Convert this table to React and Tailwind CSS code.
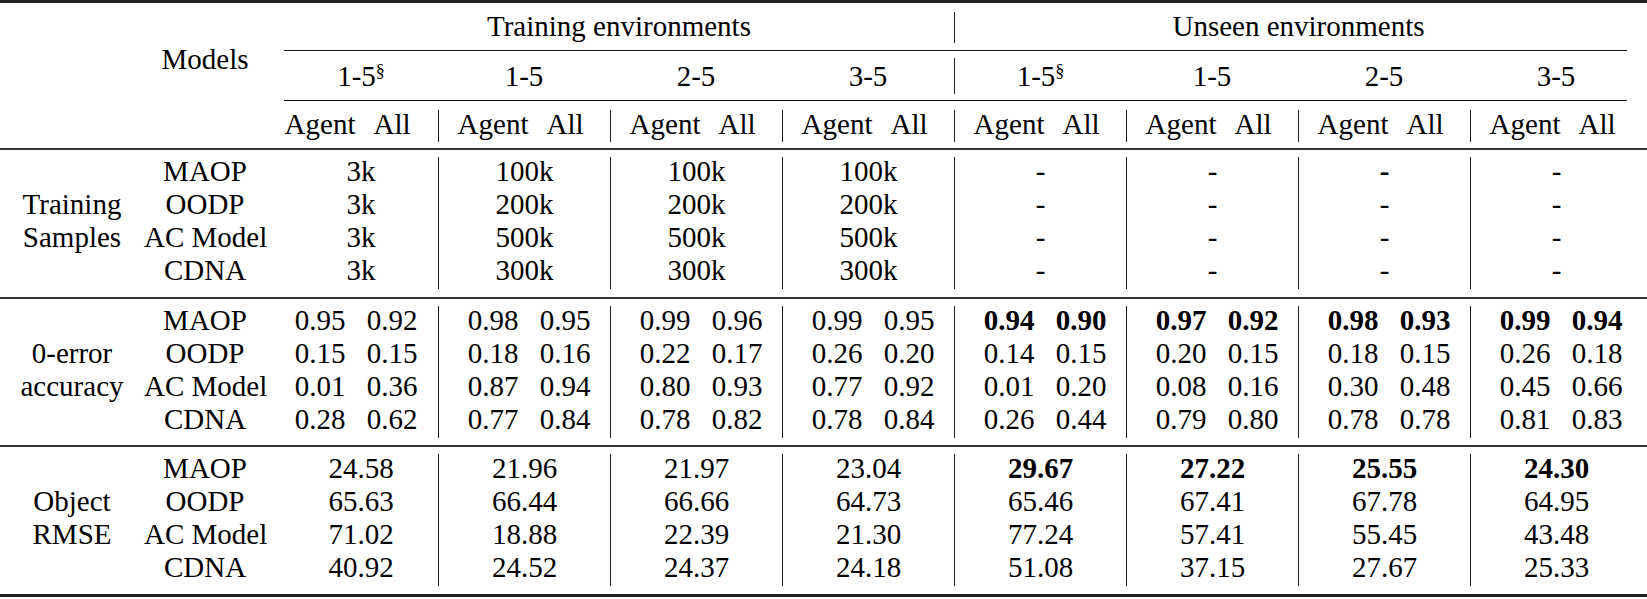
import React from "react";
import clsx from "clsx";

const sections = [
  {
    label: ["Training", "Samples"],
    rows: [
      { model: "MAOP", vals: ["3k", "100k", "100k", "100k", "-", "-", "-", "-"], bold: [6] },
      { model: "OODP", vals: ["3k", "200k", "200k", "200k", "-", "-", "-", "-"] },
      { model: "AC Model", vals: ["3k", "500k", "500k", "500k", "-", "-", "-", "-"] },
      { model: "CDNA", vals: ["3k", "300k", "300k", "300k", "-", "-", "-", "-"] },
    ],
  },
  {
    label: ["0-error", "accuracy"],
    rows: [
      {
        model: "MAOP",
        vals: [
          ["0.95", "0.92"], ["0.98", "0.95"], ["0.99", "0.96"], ["0.99", "0.95"],
          ["0.94", "0.90"], ["0.97", "0.92"], ["0.98", "0.93"], ["0.99", "0.94"],
        ],
        bold: [4, 5, 6, 7],
      },
      {
        model: "OODP",
        vals: [
          ["0.15", "0.15"], ["0.18", "0.16"], ["0.22", "0.17"], ["0.26", "0.20"],
          ["0.14", "0.15"], ["0.20", "0.15"], ["0.18", "0.15"], ["0.26", "0.18"],
        ],
      },
      {
        model: "AC Model",
        vals: [
          ["0.01", "0.36"], ["0.87", "0.94"], ["0.80", "0.93"], ["0.77", "0.92"],
          ["0.01", "0.20"], ["0.08", "0.16"], ["0.30", "0.48"], ["0.45", "0.66"],
        ],
      },
      {
        model: "CDNA",
        vals: [
          ["0.28", "0.62"], ["0.77", "0.84"], ["0.78", "0.82"], ["0.78", "0.84"],
          ["0.26", "0.44"], ["0.79", "0.80"], ["0.78", "0.78"], ["0.81", "0.83"],
        ],
      },
    ],
  },
  {
    label: ["Object", "RMSE"],
    rows: [
      { model: "MAOP", vals: ["24.58", "21.96", "21.97", "23.04", "29.67", "27.22", "25.55", "24.30"], bold: [4, 5, 6, 7] },
      { model: "OODP", vals: ["65.63", "66.44", "66.66", "64.73", "65.46", "67.41", "67.78", "64.95"] },
      { model: "AC Model", vals: ["71.02", "18.88", "22.39", "21.30", "77.24", "57.41", "55.45", "43.48"] },
      { model: "CDNA", vals: ["40.92", "24.52", "24.37", "24.18", "51.08", "37.15", "27.67", "25.33"] },
    ],
  },
];

const envs = ["1-5§", "1-5", "2-5", "3-5", "1-5§", "1-5", "2-5", "3-5"];

function Cell({ v, i, bold }) {
  const cls = clsx("w-[172px]", i > 0 && "border-l border-[#222]", bold && "font-bold");
  if (Array.isArray(v)) {
    return (
      <div className={clsx(cls, "flex pl-[18px]")}>
        <span className="w-[72px] text-center">{v[0]}</span>
        <span className="w-[72px] text-center">{v[1]}</span>
      </div>
    );
  }
  return <div className={clsx(cls, "text-center", i === 0 && "pl-[18px]")}>{v}</div>;
}

function EnvLabel({ text }) {
  if (text.endsWith("§")) {
    return (
      <>
        {text.slice(0, -1)}
        <sup className="text-[18px]">§</sup>
      </>
    );
  }
  return text;
}

export default function App() {
  return (
    <div className="w-[1647px] h-[599px] bg-white text-black text-[29px] whitespace-nowrap font-['Liberation_Serif'] [font-family:Liberation_Serif]">
      {/* top rule */}
      <div className="h-[3px] bg-[#222]" />

      {/* header rows 1-2 */}
      <div className="flex">
        <div className="w-[266px] flex">
          <div className="w-[144px]" />
          <div className="w-[122px] text-center pt-[40px] leading-[33px]">Models</div>
        </div>
        <div className="flex-1">
          <div className="flex pt-[9px] pb-[7px]">
            <div className="w-[688px] h-[31px] leading-[29px] text-center pl-[18px]">
              Training environments
            </div>
            <div className="w-[688px] h-[31px] leading-[29px] text-center border-l border-[#222]">
              Unseen environments
            </div>
          </div>
          <div className="h-px bg-[#111] ml-[18px] mr-[20px]" />
          <div className="flex pt-[7px] pb-[6px]">
            {envs.map((e, i) => (
              <div
                key={i}
                className={clsx(
                  "w-[172px] h-[36px] leading-[37px] text-center",
                  i === 0 && "pl-[18px]",
                  i === 4 && "border-l border-[#222]"
                )}
              >
                <EnvLabel text={e} />
              </div>
            ))}
          </div>
          <div className="h-px bg-[#111] ml-[18px] mr-[20px]" />
        </div>
      </div>

      {/* header row 3 */}
      <div className="flex pt-[9px] pb-[6px]">
        <div className="w-[266px]" />
        {envs.map((_, i) => (
          <div
            key={i}
            className={clsx(
              "w-[172px] h-[32px] leading-[28px] flex pl-[18px]",
              i > 0 && "border-l border-[#222]"
            )}
          >
            <span className="w-[72px] text-center">Agent</span>
            <span className="w-[72px] text-center">All</span>
          </div>
        ))}
      </div>

      {sections.map((s, si) => (
        <div key={si}>
          <div className="h-[2px] bg-[#333]" />
          <div className={clsx("pt-[7px]", si === 1 ? "pb-[7px]" : "pb-[8px]")}>
            {s.rows.map((r, ri) => (
              <div key={ri} className="flex h-[33px] leading-[29px]">
                <div className="w-[144px] text-center">
                  {ri === 1 ? s.label[0] : ri === 2 ? s.label[1] : ""}
                </div>
                <div className="w-[122px] text-center">{r.model}</div>
                {r.vals.map((v, i) => (
                  <Cell key={i} v={v} i={i} bold={r.bold && r.bold.includes(i)} />
                ))}
              </div>
            ))}
          </div>
        </div>
      ))}

      {/* bottom rule */}
      <div className="h-[3px] bg-[#222]" />
    </div>
  );
}
